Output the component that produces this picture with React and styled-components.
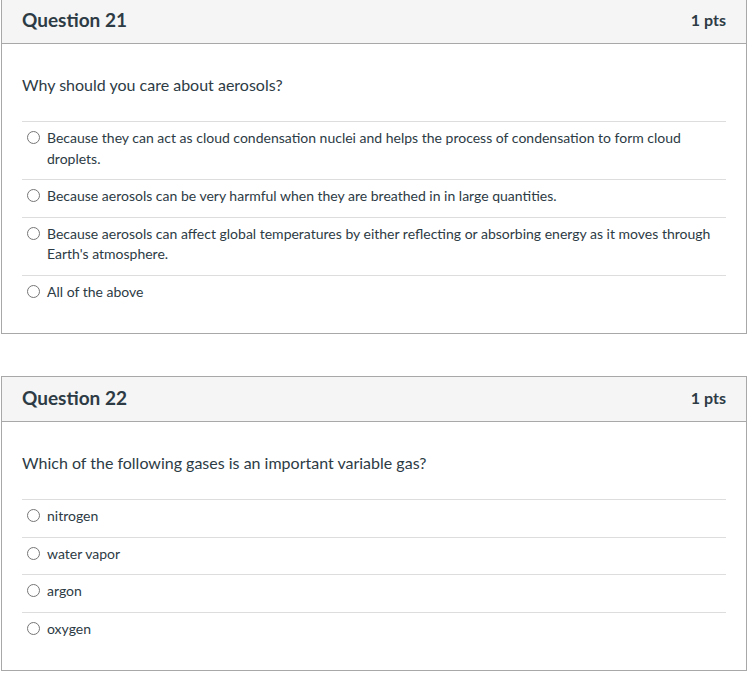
import React from "react"
import styled, { createGlobalStyle } from "styled-components"

const Global = createGlobalStyle`
  body {
    margin: 0;
    background: #fff;
    font-family: Lato, "Open Sans", sans-serif;
    color: #2d3b45;
  }
`

const Page = styled.div`
  display: flex;
  flex-direction: column;
  gap: 42px;
  margin-top: -2px;
  padding-left: 1px;
  width: 746px;
`

const Card = styled.section`
  border: 1px solid #a8a8a8;
  background: #fff;
`

const Header = styled.header`
  display: flex;
  align-items: center;
  justify-content: space-between;
  height: 40px;
  padding: 0 20px 4px;
  background: #f5f5f5;
  border-bottom: 1px solid #a8a8a8;
`

const Title = styled.h2`
  margin: 0;
  font-size: 19px;
  font-weight: 700;
  color: #2d3b45;
`

const Points = styled.span`
  font-size: 16px;
  font-weight: 700;
  color: #2d3b45;
`

const Body = styled.div`
  padding: 29px 20px 21px;
`

const Prompt = styled.p`
  margin: 0 0 24px;
  font-size: 16px;
  line-height: 24px;
`

const Answers = styled.ul`
  list-style: none;
  margin: 0;
  padding: 0;
`

const Answer = styled.li`
  display: flex;
  align-items: flex-start;
  gap: 7px;
  border-top: 1px solid #dddddd;
  padding: 6px 0 10px 5px;
  font-size: 14px;
  line-height: 20.5px;
`

const Radio = styled.span`
  flex: none;
  width: 11px;
  height: 11px;
  margin-top: 3px;
  border: 1px solid #767676;
  border-radius: 50%;
  background: #fff;
`

const questions = [
  {
    title: "Question 21",
    prompt: "Why should you care about aerosols?",
    answers: [
      "Because they can act as cloud condensation nuclei and helps the process of condensation to form cloud droplets.",
      "Because aerosols can be very harmful when they are breathed in in large quantities.",
      "Because aerosols can affect global temperatures by either reflecting or absorbing energy as it moves through Earth's atmosphere.",
      "All of the above",
    ],
  },
  {
    title: "Question 22",
    prompt: "Which of the following gases is an important variable gas?",
    answers: ["nitrogen", "water vapor", "argon", "oxygen"],
  },
]

const App = () => (
  <>
    <Global />
    <Page>
      {questions.map((q) => (
        <Card key={q.title}>
          <Header>
            <Title>{q.title}</Title>
            <Points>1 pts</Points>
          </Header>
          <Body>
            <Prompt>{q.prompt}</Prompt>
            <Answers>
              {q.answers.map((a) => (
                <Answer key={a}>
                  <Radio />
                  <span>{a}</span>
                </Answer>
              ))}
            </Answers>
          </Body>
        </Card>
      ))}
    </Page>
  </>
)

export default App
